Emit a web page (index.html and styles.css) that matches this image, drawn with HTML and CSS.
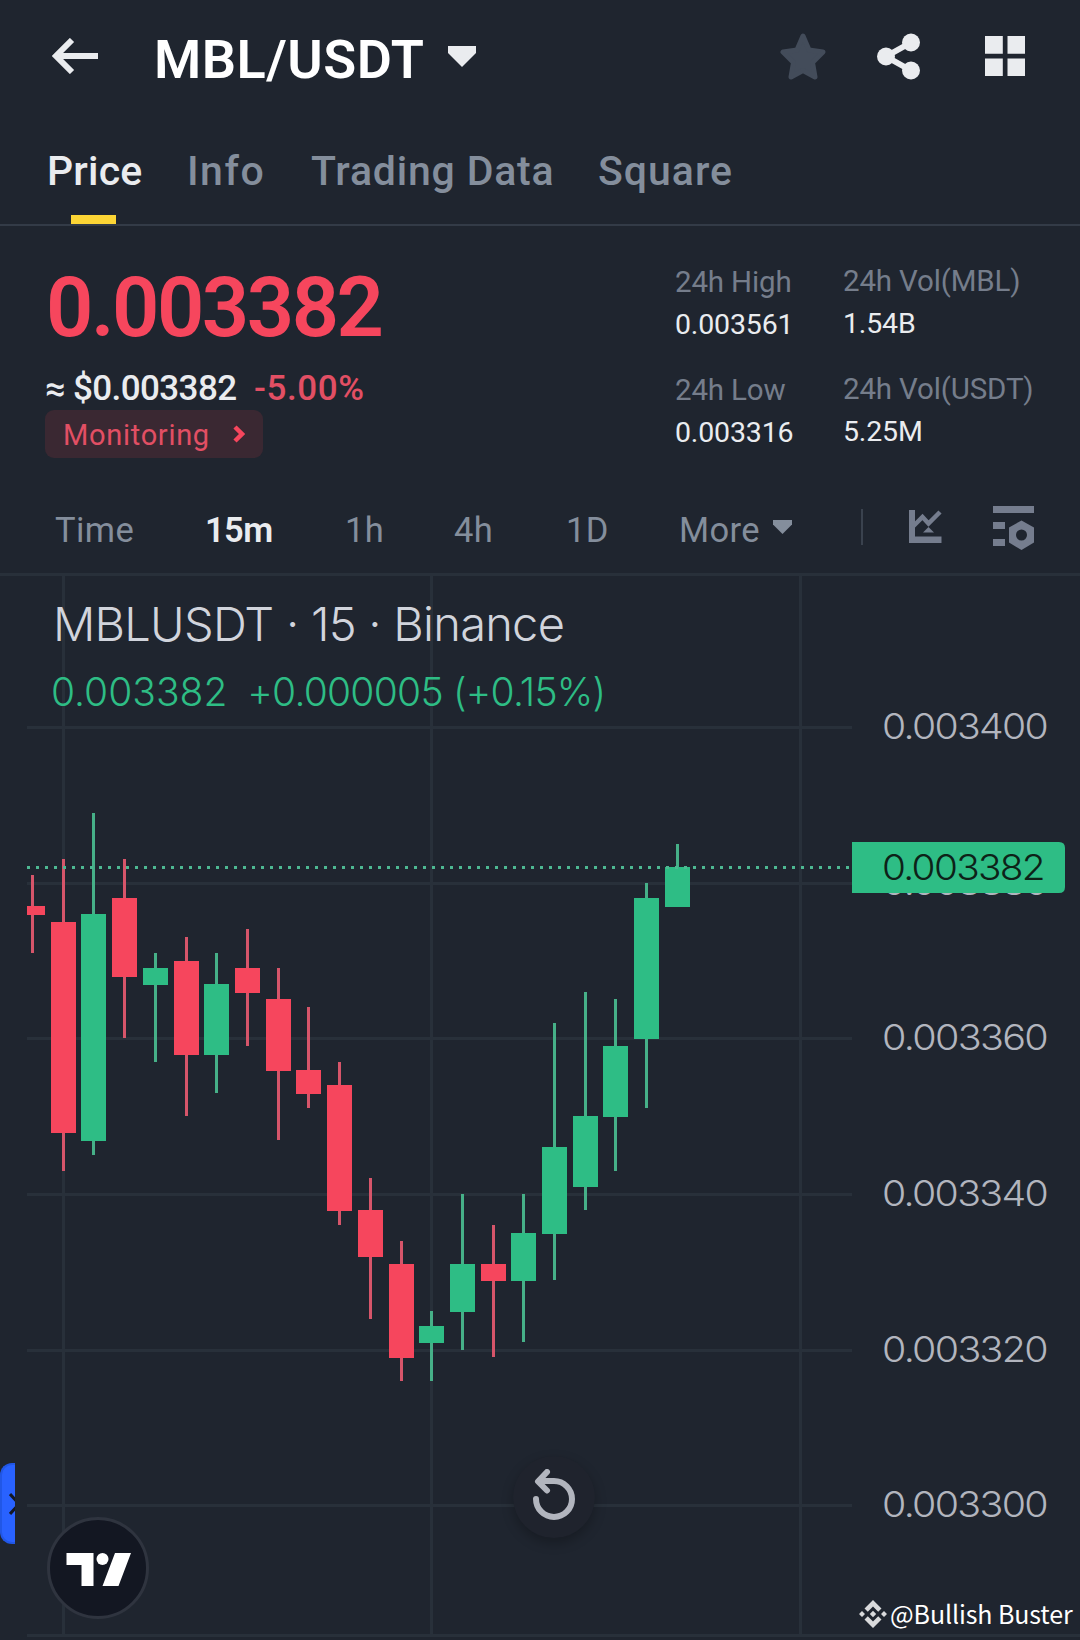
FILE: index.html
```html
<!DOCTYPE html>
<html lang="en">
<head>
    <meta charset="UTF-8">
    <meta name="viewport" content="width=device-width, initial-scale=1.0">
    <title>MBL/USDT</title>
    <link rel="stylesheet" href="styles.css">
</head>
<body>
    <header class="topbar">
        <svg class="back" width="46" height="36" viewBox="0 0 46 36"><path d="M20 2L4 18l16 16M4 18h42" fill="none" stroke="#eaecef" stroke-width="6"/></svg>
        <h1>MBL/USDT</h1>
        <svg class="caret" width="28" height="21" viewBox="0 0 28 21"><path d="M0 0h28v7L14 21 0 7z" fill="#eaecef"/></svg>
        <div class="actions">
            <svg width="46" height="47" viewBox="0 0 46 47"><path d="M23 3l6 14 14 2-10.500 10.500L35 44l-12-6.500L11 44l2.500-14.500L3 19l14-2z" fill="#434c5a" stroke="#434c5a" stroke-width="5" stroke-linejoin="round"/></svg>
            <svg width="43" height="47" viewBox="0 0 43 47"><g fill="#eaecef"><circle cx="9" cy="23.500" r="9"/><circle cx="34" cy="9.500" r="9"/><circle cx="34" cy="37.500" r="9"/></g><path d="M34 9.500L9 23.500l25 14" fill="none" stroke="#eaecef" stroke-width="6"/></svg>
            <svg width="40" height="40" viewBox="0 0 40 40"><path d="M0 0h17.800v17.800H0zM22.500 0H40v17.800H22.500zM0 22.500h17.800V40H0zM22.500 22.500H40V40H22.500z" fill="#eaecef"/></svg>
        </div>
    </header>

    <nav class="tabs">
        <span class="tab tab-price active">Price</span>
        <span class="tab tab-info">Info</span>
        <span class="tab tab-data">Trading Data</span>
        <span class="tab tab-square">Square</span>
    </nav>

    <section class="ticker">
        <div class="ticker-main">
            <div class="price">0.003382</div>
            <div class="fiat"><span class="approx">≈</span><span class="usd">$0.003382</span><span class="change">-5.00%</span></div>
            <div class="badge">
                <span>Monitoring</span>
                <svg width="12" height="18" viewBox="0 0 12 18"><path d="M2 2l7 7-7 7" fill="none" stroke="#f6465d" stroke-width="4.500"/></svg>
            </div>
        </div>
        <div class="stats">
            <div class="stats-col">
                <div class="label">24h High</div>
                <div class="value">0.003561</div>
                <div class="label">24h Low</div>
                <div class="value">0.003316</div>
            </div>
            <div class="stats-col stats-vol">
                <div class="label">24h Vol(MBL)</div>
                <div class="value">1.54B</div>
                <div class="label">24h Vol(USDT)</div>
                <div class="value">5.25M</div>
            </div>
        </div>
    </section>

    <nav class="periods">
        <span>Time</span>
        <span class="active">15m</span>
        <span>1h</span>
        <span>4h</span>
        <span>1D</span>
        <span>More</span>
        <svg width="19" height="14" viewBox="0 0 19 14"><path d="M0 0h19v4.500L9.500 14 0 4.500z" fill="#848e9c"/></svg>
        <i class="divider"></i>
        <svg width="33" height="33" viewBox="0 0 33 33"><g fill="#757d8e"><path d="M0 0h6v26.500h26.500V33H0z"/><path d="M14 22.500l5.500-5.500 5.500 5.500z"/></g><path d="M4 16.500L13.500 7l6 6.500L31 2" fill="none" stroke="#757d8e" stroke-width="4.500"/></svg>
        <svg width="42" height="44" viewBox="0 0 42 44"><path d="M0 0h41v7H0zM0 16h12v7H0zM0 33h12v7H0z" fill="#757d8e"/><path fill-rule="evenodd" d="M28.500 14.500L41 21.500v15l-12.500 7.500L16 36.500v-15zM28.500 23.500a5.500 5.500 0 100 11 5.500 5.500 0 000-11z" fill="#757d8e"/></svg>
    </nav>

    <main class="chart">
        <svg id="plot" class="plot" width="1080" height="1067" viewBox="0 573 1080 1067">
            <g id="grid"></g>
            <g id="candles"></g>
            <path d="M27 867.500H852" class="last-line"/>
            <g id="axis"></g>
            <path d="M852 842h207q6 0 6 6v39q0 6-6 6H852z" fill="#2ebd85"/>
            <text x="882" y="880" class="axis-text last" textLength="162" lengthAdjust="spacingAndGlyphs">0.003382</text>
        </svg>

        <div class="legend">
            <div class="legend-title">MBLUSDT · 15 · Binance</div>
            <div class="legend-values"><span>0.003382</span><span class="diff">+0.000005 (+0.15%)</span></div>
        </div>

        <div class="drawer"><svg width="6" height="22" viewBox="0 0 6 22"><path d="M1 1l9 10-9 10" fill="none" stroke="#131722" stroke-width="3"/></svg></div>

        <svg class="tv" width="104" height="104" viewBox="0 0 104 104">
            <circle cx="52" cy="52" r="49.500" fill="#131722" stroke="#2f343f" stroke-width="3"/>
            <g fill="#fff"><path d="M20.500 37h27v33h-12V49h-15zM69 37h16L72.500 70h-16z"/><circle cx="56.500" cy="43" r="6"/></g>
        </svg>

        <div class="reset">
            <svg width="48" height="56" viewBox="0 0 48 56"><path d="M6 30a18 18 0 1018-18H9M17 3L8 12.500l9 9" fill="none" stroke="#b2b5be" stroke-width="6" stroke-linecap="round" stroke-linejoin="round"/></svg>
        </div>

        <div class="author">
            <svg width="28" height="28" viewBox="0 0 28 28"><g fill="#d9dadc"><path d="M14 0l8.500 8.500-3.300 3.300L14 6.600l-5.200 5.200-3.300-3.300zM14 28l-8.500-8.500 3.300-3.300 5.200 5.200 5.200-5.200 3.300 3.300zM3 11l3 3-3 3-3-3zM25 11l3 3-3 3-3-3zM14 10.800l3.200 3.200-3.200 3.200-3.200-3.200z"/></g></svg>
            <span>@Bullish Buster</span>
        </div>
    </main>

    <script>
        // x, high, body top, body bottom, low, direction
        const candles = [
            [20, 875, 906, 915, 953, "down"],
            [51, 859, 922, 1133, 1171, "down"],
            [81, 813, 914, 1141, 1155, "up"],
            [112, 859, 898, 977, 1038, "down"],
            [143, 953, 968, 985, 1062, "up"],
            [174, 937, 961, 1055, 1116, "down"],
            [204, 953, 984, 1055, 1093, "up"],
            [235, 929, 968, 993, 1046, "down"],
            [266, 968, 999, 1071, 1140, "down"],
            [296, 1007, 1070, 1094, 1108, "down"],
            [327, 1062, 1085, 1211, 1225, "down"],
            [358, 1178, 1210, 1257, 1319, "down"],
            [389, 1241, 1264, 1358, 1381, "down"],
            [419, 1311, 1326, 1343, 1381, "up"],
            [450, 1194, 1264, 1312, 1350, "up"],
            [481, 1225, 1264, 1281, 1357, "down"],
            [511, 1194, 1233, 1281, 1342, "up"],
            [542, 1023, 1147, 1234, 1280, "up"],
            [573, 992, 1116, 1187, 1210, "up"],
            [603, 999, 1046, 1117, 1171, "up"],
            [634, 883, 898, 1039, 1108, "up"],
            [665, 844, 867, 907, 907, "up"],
        ];
        const levels = [
            { label: "0.003400", y: 726 },
            { label: "0.003380", y: 882 },
            { label: "0.003360", y: 1037 },
            { label: "0.003340", y: 1193 },
            { label: "0.003320", y: 1349 },
            { label: "0.003300", y: 1504 },
        ];

        let grid = `<rect x="0" y="573" width="1080" height="3"/><rect x="27" y="1634" width="1053" height="3"/>`;
        let axis = "";
        [62, 430, 799].forEach(x => {
            grid += `<rect x="${x}" y="573" width="3" height="1061"/>`;
        });
        levels.forEach(level => {
            grid += `<rect x="27" y="${level.y}" width="825" height="3"/>`;
            axis += `<text x="882" y="${level.y + 12.5}" class="axis-text" textLength="165" lengthAdjust="spacingAndGlyphs">${level.label}</text>`;
        });
        document.getElementById("grid").innerHTML = grid;
        document.getElementById("axis").innerHTML = axis;

        // the first candle is cut off by the left edge of the plot
        document.getElementById("candles").innerHTML = candles.map(([x, high, top, bottom, low, dir]) => {
            const left = Math.max(x, 27);
            return `<rect class="wick-${dir}" x="${x + 11}" y="${high}" width="3" height="${low - high}"/>
                <rect class="${dir}" x="${left}" y="${top}" width="${x + 25 - left}" height="${bottom - top}"/>`;
        }).join("");
    </script>
</body>
</html>
```
FILE: styles.css
```css
:root {
    --bg: #1f252f;
    --text: #eaecef;
    --muted: #848e9c;
    --up: #2ebd85;
    --down: #f6465d;
}

* {
    box-sizing: border-box;
}

body {
    margin: 0;
    width: 1080px;
    height: 1640px;
    overflow: hidden;
    background: var(--bg);
    color: var(--text);
    font-family: Roboto, sans-serif;
}

svg {
    display: block;
    flex: none;
}

.topbar {
    display: flex;
    align-items: center;
    height: 112px;
    padding: 0 55px 0 52px;
}

.topbar h1 {
    width: 294px;
    margin: 7px 0 0 56px;
    font-size: 54px;
    font-weight: 600;
    line-height: 64px;
    letter-spacing: 0.5px;
    color: #fff;
    white-space: nowrap;
}

.actions {
    display: flex;
    align-items: center;
    margin-left: auto;
}

.actions svg:nth-child(2) {
    margin: 0 65px 0 51px;
}

.tabs {
    display: flex;
    height: 114px;
    border-bottom: 2px solid #333b47;
    font-size: 41px;
    font-weight: 500;
    line-height: 48px;
    color: var(--muted);
}

.tab {
    padding-top: 35px;
    white-space: nowrap;
}

.tab-price {
    width: 140px;
    margin-left: 47px;
    letter-spacing: 0.2px;
}

.tab-info {
    width: 124px;
    letter-spacing: 1.5px;
}

.tab-data {
    width: 287px;
    letter-spacing: 0.8px;
}

.tab-square {
    letter-spacing: 1px;
}

.tabs .active {
    color: var(--text);
}

.tabs .active::after {
    content: "";
    display: block;
    width: 45px;
    height: 9px;
    margin: 20px 0 0 24px;
    background: #fcd535;
}

.ticker {
    display: flex;
    height: 264px;
}

.ticker-main {
    width: 630px;
    margin-left: 45px;
    padding-top: 33px;
}

.price {
    margin-left: 1px;
    font-size: 83px;
    font-weight: 600;
    line-height: 98px;
    letter-spacing: -2.5px;
    color: var(--down);
}

.fiat {
    display: flex;
    margin-top: 12px;
    font-size: 35px;
    font-weight: 500;
    line-height: 40px;
    letter-spacing: -0.6px;
}

.approx {
    width: 28px;
    font-size: 36px;
}

.usd {
    width: 181px;
}

.change {
    letter-spacing: 0.6px;
    color: #e24f64;
}

.badge {
    display: flex;
    align-items: center;
    justify-content: space-between;
    width: 218px;
    height: 48px;
    margin-top: 1px;
    padding: 0 18px;
    border-radius: 9px;
    background: #3a2832;
    color: #e24f64;
    font-size: 29px;
    letter-spacing: 0.7px;
}

.badge span {
    padding-top: 2px;
}

.stats {
    display: flex;
    padding-top: 37px;
}

.stats-col {
    width: 168px;
    padding-top: 1px;
    white-space: nowrap;
}

.stats-vol {
    width: 220px;
    padding-top: 0;
}

.label {
    font-size: 29.5px;
    line-height: 36px;
    letter-spacing: -0.15px;
    color: #757d8b;
}

.value {
    margin: 7px 0 29px;
    font-size: 28.5px;
    line-height: 36px;
    letter-spacing: -0.15px;
}

.periods {
    display: grid;
    grid-template-columns: 150px 140px 109px 112px 113px 95px 87px 49px 85px 42px;
    height: 83px;
    padding-left: 55px;
    font-size: 34.5px;
    line-height: 40px;
    letter-spacing: 0.4px;
    color: var(--muted);
}

.periods span {
    padding-top: 20px;
}

.periods .active {
    color: var(--text);
    font-weight: 600;
    letter-spacing: -0.6px;
}

.periods svg:nth-child(7) {
    margin: 30px 0 0 -1px;
}

.periods svg:nth-child(9) {
    margin: 20px 0 0 -1px;
}

.periods svg:nth-child(10) {
    margin-top: 16px;
    margin-left: -2px;
}

.divider {
    width: 2px;
    height: 36px;
    margin-top: 19px;
    background: #3a424e;
}

.chart {
    position: relative;
    height: 1067px;
    font-family: Inter, "Liberation Sans", sans-serif;
    font-weight: 300;
}

#grid {
    fill: #28303a;
}

.up {
    fill: var(--up);
}

.down {
    fill: var(--down);
}

.wick-up {
    fill: #46b088;
}

.wick-down {
    fill: #d6556a;
}

.last-line {
    stroke: #4db892;
    stroke-width: 3;
    stroke-dasharray: 3 6;
}

.axis-text {
    font-size: 35px;
    letter-spacing: -1.5px;
    fill: #b2b5be;
}

.axis-text.last {
    fill: #0d2218;
}

.legend {
    position: absolute;
    top: 23px;
    left: 52px;
    white-space: nowrap;
}

.legend-title {
    margin-left: 1px;
    font-size: 47px;
    line-height: 56px;
    letter-spacing: -0.75px;
    color: #d1d4dc;
}

.legend-values {
    display: flex;
    gap: 20px;
    margin: 16px 0 0 -1px;
    font-size: 39px;
    line-height: 48px;
    color: var(--up);
}

.diff {
    letter-spacing: -0.75px;
}

.drawer {
    position: absolute;
    top: 890px;
    left: 0;
    display: flex;
    align-items: center;
    justify-content: flex-end;
    width: 15px;
    height: 81px;
    border: 2px solid #2157e6;
    border-right: 0;
    border-radius: 12px 0 0 12px;
    background: #2962ff;
}

.tv {
    position: absolute;
    top: 943px;
    left: 46px;
}

.reset {
    position: absolute;
    top: 883px;
    left: 513px;
    display: flex;
    align-items: center;
    justify-content: center;
    width: 82px;
    height: 82px;
    border-radius: 50%;
    background: #1f232d;
    box-shadow: 0 5px 12px rgba(0, 0, 0, 0.25);
}

.author {
    position: absolute;
    top: 1024px;
    left: 859px;
    display: flex;
    align-items: center;
    gap: 3px;
    font-family: "Noto Sans CJK SC", "Noto Sans", sans-serif;
    font-size: 25px;
    font-weight: 400;
    line-height: 36px;
    letter-spacing: -0.1px;
    color: #fff;
    white-space: nowrap;
}

.author span {
    margin-top: -2px;
}
```
